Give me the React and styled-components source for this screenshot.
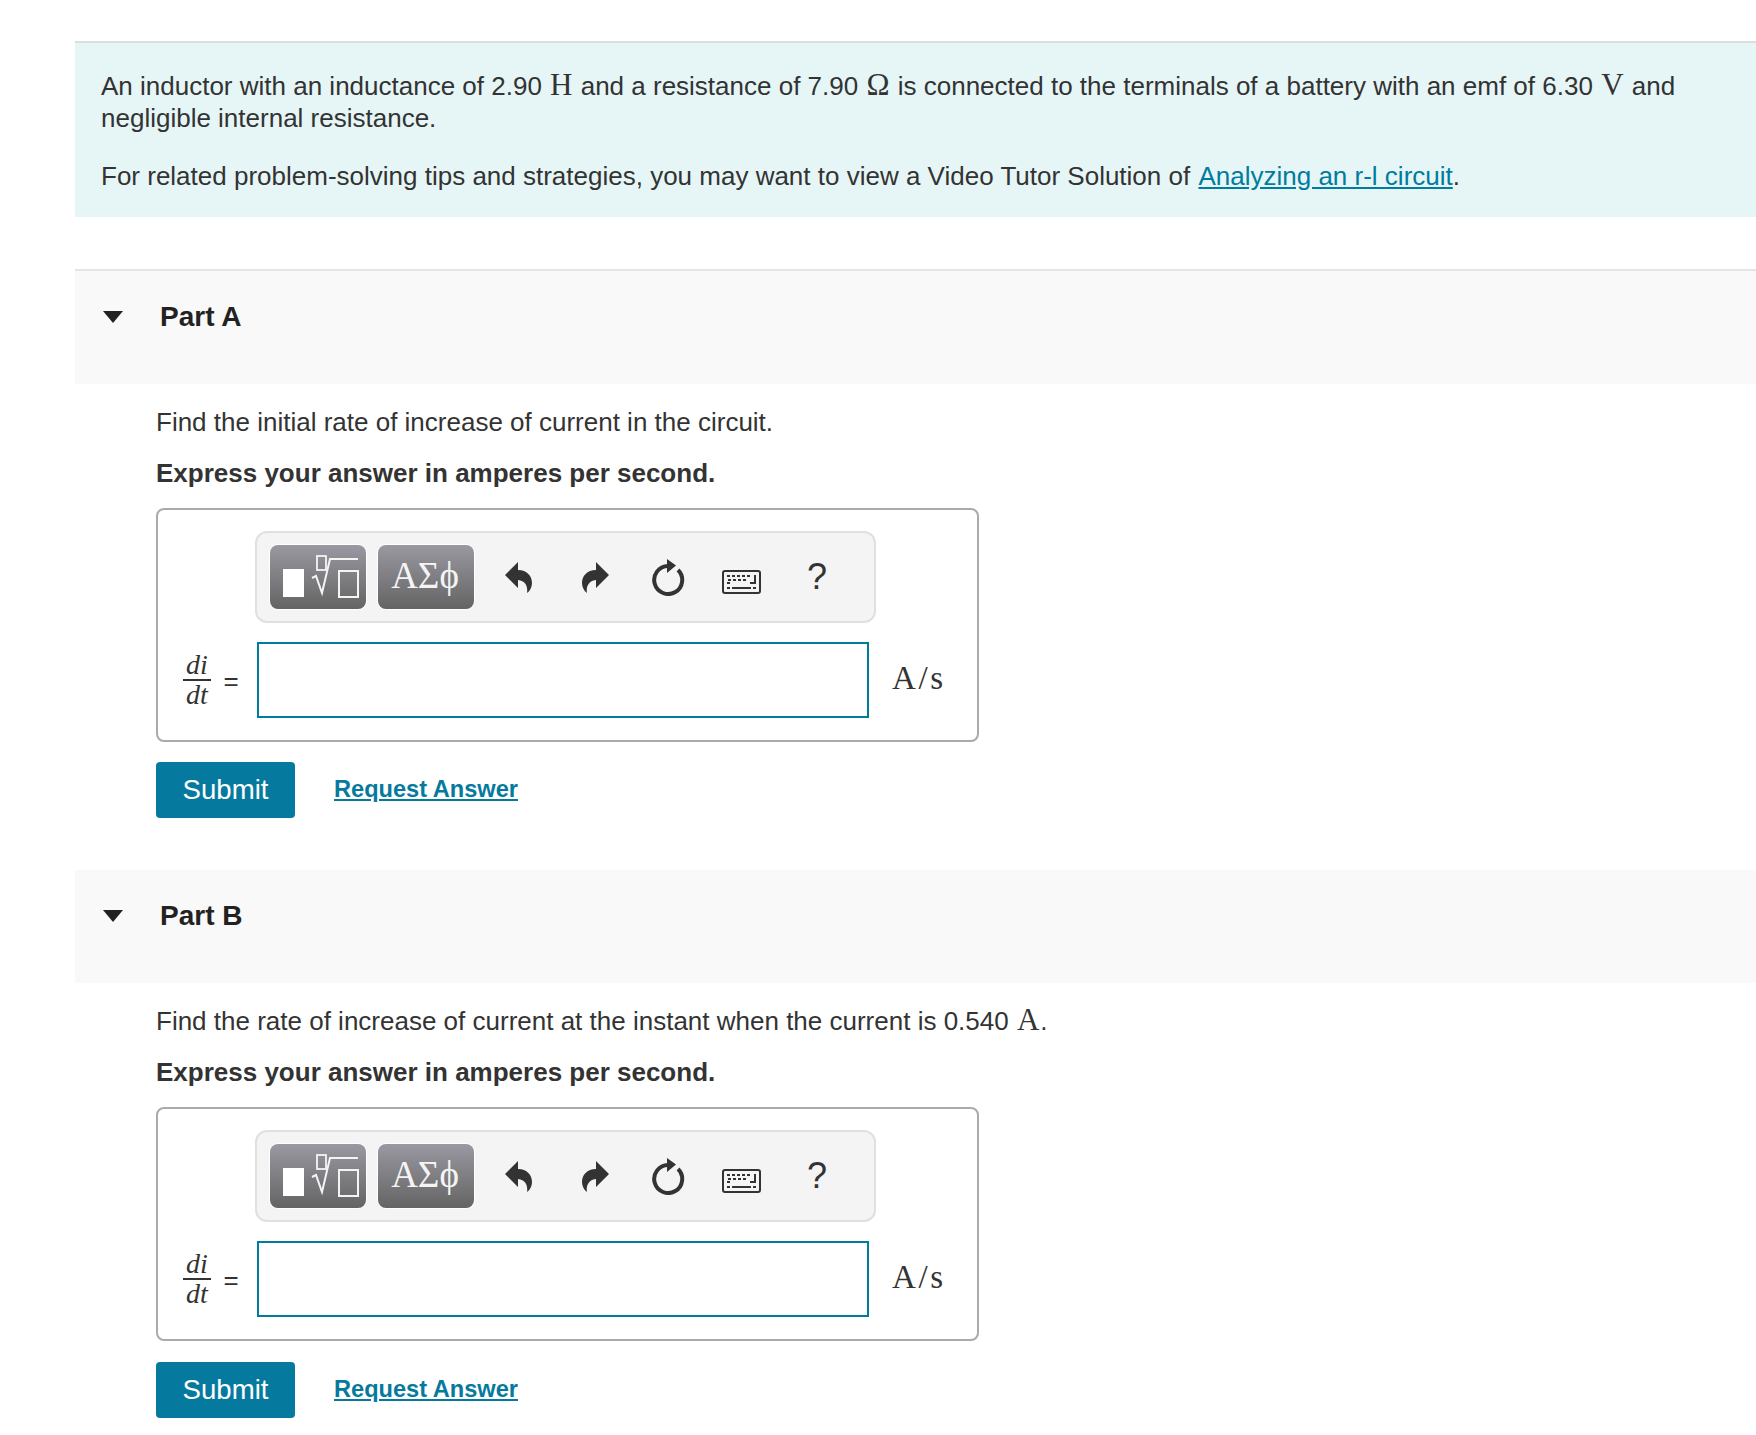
import styled, { createGlobalStyle } from "styled-components";

const GlobalStyle = createGlobalStyle`
  html, body {
    margin: 0;
    padding: 0;
    background: #fff;
  }
  body {
    font-family: "Liberation Sans", Arial, sans-serif;
    color: #333;
    font-size: 26px;
    line-height: 32px;
  }
`;

const UndoIcon = () => (
  <svg width="27" height="31" viewBox="0 0 27 31">
    <path d="M0 13 L13 0 V8 C22 8 27 14 27 21 C27 25 25 29 22 31 C23 25 21 19 13 18 V26 Z" fill="#333" />
  </svg>
);

const RedoIcon = () => (
  <svg width="27" height="31" viewBox="0 0 27 31">
    <path d="M27 13 L14 0 V8 C5 8 0 14 0 21 C0 25 2 29 5 31 C4 25 6 19 14 18 V26 Z" fill="#333" />
  </svg>
);

const ResetIcon = () => (
  <svg width="33" height="37" viewBox="0 0 33 37">
    <path d="M16 7 A14 14 0 1 0 26 11" fill="none" stroke="#333" strokeWidth="4" />
    <path d="M15 0 L24 6.5 L15 14 Z" fill="#333" />
  </svg>
);

const KeyboardIcon = () => (
  <svg width="39" height="24" viewBox="0 0 39 24">
    <rect x="1" y="1" width="37" height="22" rx="2" fill="#f4f4f4" stroke="#333" strokeWidth="2" />
    <path
      d="M5 5h3v2H5zM10 5h3v2h-3zM15 5h3v2h-3zM20 5h3v2h-3zM25 5h3v2h-3zM31 5h3v9h-6v-2h4V5zM6 9h3v2H6zM11 9h3v2h-3zM16 9h3v2h-3zM21 9h3v2h-3zM5 12h3v2H5zM5 17h3v2H5zM10 17h19v2H10zM31 17h3v2h-3z"
      fill="#333"
    />
  </svg>
);

const TemplatesIcon = () => (
  <svg width="96" height="64" viewBox="0 0 96 64">
    <rect x="13" y="24" width="21" height="28" fill="#fff" />
    <rect x="47" y="11" width="9" height="14" fill="none" stroke="#f4f4f4" strokeWidth="1.8" />
    <path d="M42 33 L46 31 L52 48 L60 14 H88" fill="none" stroke="#f4f4f4" strokeWidth="2" />
    <rect x="69" y="26" width="19" height="26" fill="none" stroke="#f4f4f4" strokeWidth="2" />
  </svg>
);

const AnswerPart = ({ title, first, children }) => (
  <Part>
    <PartHeader $first={first}>
      <Caret />
      <PartTitle>{title}</PartTitle>
    </PartHeader>
    <PartBody>
      <Question>{children}</Question>
      <Instruction>Express your answer in amperes per second.</Instruction>
      <AnswerBox>
        <Toolbar>
          <ToolGroup>
            <GradientButton>
              <TemplatesIcon />
            </GradientButton>
            <GradientButton>
              <GreekLabel>ΑΣϕ</GreekLabel>
            </GradientButton>
          </ToolGroup>
          <IconSlot $width={77}>
            <UndoIcon />
          </IconSlot>
          <IconSlot $width={70}>
            <RedoIcon />
          </IconSlot>
          <IconSlot $width={70}>
            <ResetIcon />
          </IconSlot>
          <IconSlot $width={85} $drop={10}>
            <KeyboardIcon />
          </IconSlot>
          <HelpMark>?</HelpMark>
        </Toolbar>
        <AnswerRow>
          <Fraction>
            <FracTop>di</FracTop>
            <FracBottom>dt</FracBottom>
          </Fraction>
          <Equals>=</Equals>
          <AnswerInput />
          <Units>A/s</Units>
        </AnswerRow>
      </AnswerBox>
      <Actions $gap={first ? 20 : 21}>
        <SubmitButton>Submit</SubmitButton>
        <RequestLink href="#">Request Answer</RequestLink>
      </Actions>
    </PartBody>
  </Part>
);

const App = () => {
  return (
    <Page>
      <GlobalStyle />
      <Intro>
        <IntroText>
          An inductor with an inductance of 2.90 <MathText>H</MathText> and a resistance of 7.90{" "}
          <MathText>Ω</MathText> is connected to the terminals of a battery with an emf of 6.30{" "}
          <MathText>V</MathText> and negligible internal resistance.
        </IntroText>
        <IntroText>
          For related problem-solving tips and strategies, you may want to view a Video Tutor Solution of{" "}
          <TutorLink href="#">Analyzing an r-l circuit</TutorLink>.
        </IntroText>
      </Intro>
      <AnswerPart title="Part A" first>
        Find the initial rate of increase of current in the circuit.
      </AnswerPart>
      <AnswerPart title="Part B">
        Find the rate of increase of current at the instant when the current is 0.540 <MathText>A</MathText>.
      </AnswerPart>
    </Page>
  );
};

const Page = styled.div`
  padding: 41px 0 0 75px;
  width: 1681px;
`;

const Intro = styled.div`
  box-sizing: border-box;
  height: 176px;
  border-top: 2px solid #ddd;
  background: #e6f6f7;
  padding: 27px 60px 0 26px;
  margin-bottom: 52px;
`;

const IntroText = styled.p`
  margin: 0 0 26px;
`;

const MathText = styled.span`
  margin: 0 1px;
  font-family: "Liberation Serif", "Times New Roman", serif;
  font-size: 31px;
  line-height: 0;
`;

const TutorLink = styled.a`
  margin-left: 1px;
  color: #007c9e;
  text-decoration: underline;
`;

const Part = styled.section`
  height: 601px;
`;

const PartHeader = styled.div`
  box-sizing: border-box;
  height: ${(props) => (props.$first ? "115px" : "113px")};
  display: flex;
  align-items: flex-start;
  padding: 30px 0 0 28px;
  background: #f9f9f9;
  border-top: ${(props) => (props.$first ? "2px solid #e4e4e4" : "none")};
`;

const Caret = styled.span`
  width: 0;
  height: 0;
  margin-top: 10px;
  border-left: 10px solid transparent;
  border-right: 10px solid transparent;
  border-top: 12px solid #222;
`;

const PartTitle = styled.h2`
  margin: 0 0 0 37px;
  font-size: 28px;
  line-height: 32px;
  font-weight: 700;
  color: #222;
`;

const PartBody = styled.div`
  padding: 22px 0 0 81px;
`;

const Question = styled.p`
  margin: 0 0 19px;
`;

const Instruction = styled.p`
  margin: 0 0 19px;
  font-weight: 700;
`;

const AnswerBox = styled.div`
  box-sizing: border-box;
  width: 823px;
  height: 234px;
  border: 2px solid #aaa;
  border-radius: 8px;
  padding: 21px 0 0 97px;
`;

const Toolbar = styled.div`
  box-sizing: border-box;
  width: 621px;
  height: 92px;
  display: flex;
  align-items: center;
  padding-left: 13px;
  background: #f4f4f4;
  border: 2px solid #e0e0e0;
  border-radius: 12px;
`;

const ToolGroup = styled.div`
  display: flex;
  gap: 12px;
  margin-right: 31px;
`;

const GradientButton = styled.div`
  width: 96px;
  height: 64px;
  display: flex;
  align-items: center;
  justify-content: center;
  border-radius: 8px;
  background: linear-gradient(#9a98a1, #646464);
  box-shadow: 0 0 0 1px #fff;
`;

const GreekLabel = styled.span`
  margin: 0 2px 4px 0;
  color: #f4f4f4;
  font-family: "Liberation Serif", serif;
  font-size: 37px;
  line-height: 1;
`;

const IconSlot = styled.div`
  width: ${(props) => props.$width}px;
  display: flex;
  align-items: center;
  padding-top: ${(props) => props.$drop || 0}px;
`;

const HelpMark = styled.span`
  font-size: 36px;
  line-height: 1;
  color: #333;
`;

const AnswerRow = styled.div`
  display: flex;
  align-items: center;
  margin: 19px 0 0 -72px;
`;

const Fraction = styled.div`
  width: 28px;
  display: flex;
  flex-direction: column;
  align-items: center;
  font-family: "Liberation Serif", serif;
  font-style: italic;
  font-size: 28px;
  line-height: 28px;
  color: #333;
`;

const FracTop = styled.span`
  align-self: stretch;
  text-align: center;
  border-bottom: 2px solid #333;
`;

const FracBottom = styled.span``;

const Equals = styled.span`
  width: 40px;
  margin-right: 6px;
  padding-top: 2px;
  text-align: center;
  font-family: "Liberation Sans", sans-serif;
  font-size: 26px;
`;

const AnswerInput = styled.div`
  box-sizing: border-box;
  width: 612px;
  height: 76px;
  border: 2px solid #007c9e;
  background: #fff;
`;

const Units = styled.span`
  margin-left: 23px;
  padding-bottom: 4px;
  font-family: "Liberation Serif", serif;
  font-size: 33px;
  letter-spacing: 2.6px;
`;

const Actions = styled.div`
  display: flex;
  align-items: center;
  margin-top: ${(props) => props.$gap}px;
`;

const SubmitButton = styled.button`
  width: 139px;
  height: 56px;
  border: none;
  border-radius: 4px;
  background: #067a9e;
  color: #fff;
  font-family: "Liberation Sans", sans-serif;
  font-size: 27.6px;
`;

const RequestLink = styled.a`
  margin: 0 0 2px 39px;
  color: #067a9e;
  font-size: 23.6px;
  font-weight: 700;
  text-decoration: underline;
`;

export default App;
